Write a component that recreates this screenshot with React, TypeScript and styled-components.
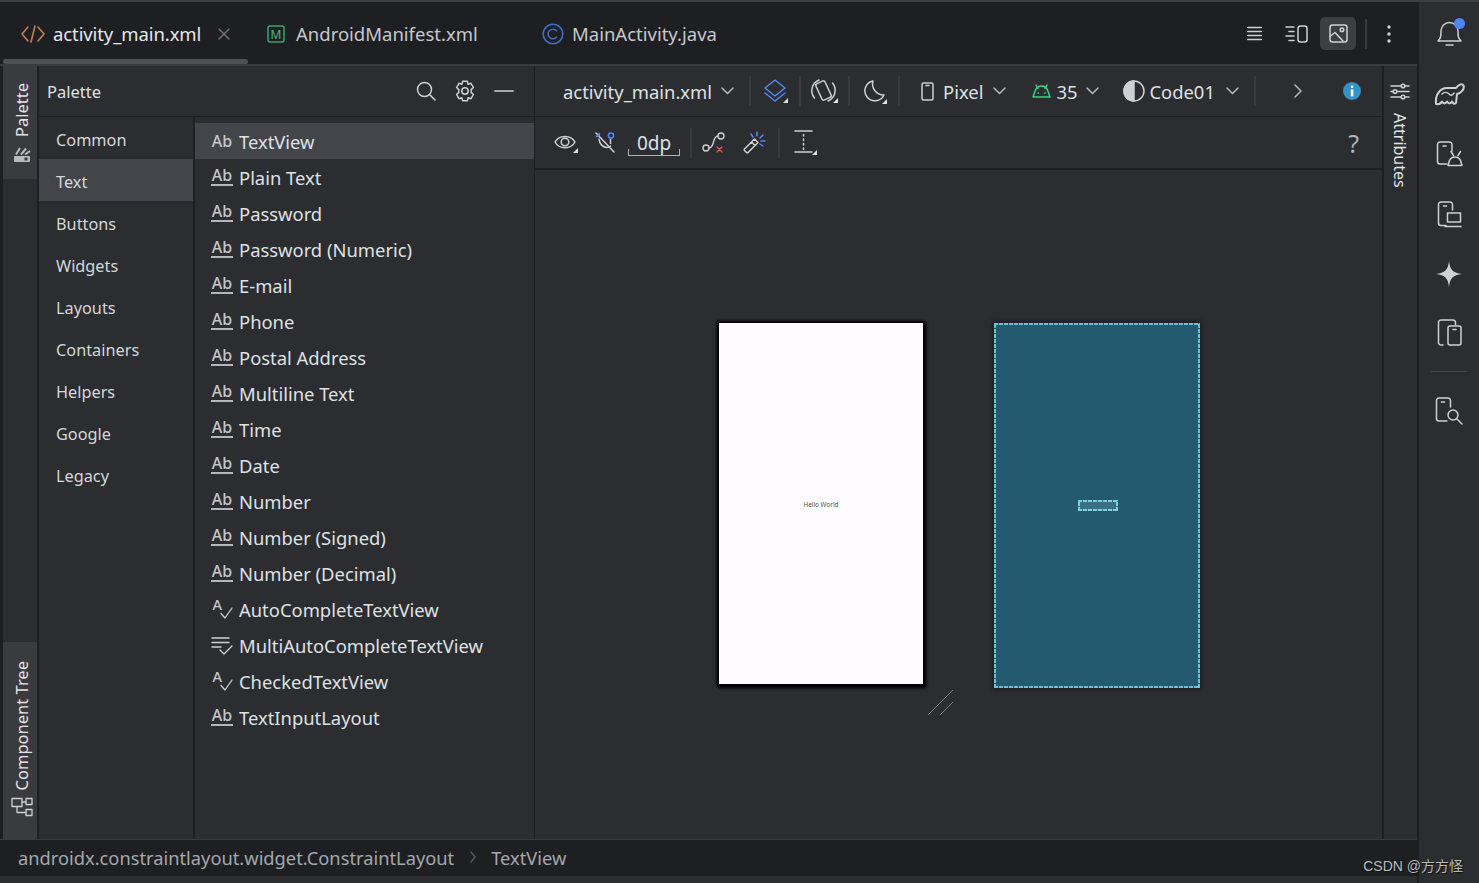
import React from "react";
import styled, { createGlobalStyle, css } from "styled-components";

const Global = createGlobalStyle`
  html, body { margin: 0; padding: 0; background: #2b2d30; }
  * { box-sizing: border-box; }
  body { font-family: "Noto Sans", "Open Sans", sans-serif; color: #dfe1e5; }
  svg { display: block; flex: none; overflow: visible; }
`;

const dashedEdges = (c: string, on: number, off: number) => css`
  background-image:
    repeating-linear-gradient(90deg, ${c} 0 ${on}px, transparent ${on}px ${on + off}px),
    repeating-linear-gradient(90deg, ${c} 0 ${on}px, transparent ${on}px ${on + off}px),
    repeating-linear-gradient(0deg, ${c} 0 ${on}px, transparent ${on}px ${on + off}px),
    repeating-linear-gradient(0deg, ${c} 0 ${on}px, transparent ${on}px ${on + off}px);
  background-position: top left, bottom left, top left, top right;
  background-size: 100% 2px, 100% 2px, 2px 100%, 2px 100%;
  background-repeat: no-repeat;
`;

const Shell = styled.div`
  position: relative;
  display: flex;
  width: 1479px;
  height: 883px;
  overflow: hidden;
  background: #2b2d30;
  border-top: 2px solid #3d3e42;
`;
const Workspace = styled.div`
  display: flex;
  flex-direction: column;
  width: 1417px;
  flex: none;
`;
const TabBar = styled.div`
  position: relative;
  display: flex;
  align-items: center;
  height: 64px;
  flex: none;
  background: #1e1f22;
  border-bottom: 2px solid #393b40;
  padding: 1px 0 0 21px;
`;
const ScrollThumb = styled.div`
  position: absolute;
  left: 3px;
  bottom: 0;
  width: 245px;
  height: 5px;
  border-radius: 3px;
  background: #4e5054;
`;
const Tab = styled.div<{ $w: number; $gap: number }>`
  display: flex;
  align-items: center;
  width: ${(p) => p.$w}px;
  flex: none;
  gap: ${(p) => p.$gap}px;
  font-size: 18.5px;
  color: #c6c8cd;
`;
const ActiveName = styled.span`
  color: #e6e8ec;
  letter-spacing: -0.1px;
  margin-right: 9px;
`;
const TabActions = styled.div`
  display: flex;
  align-items: center;
  margin-left: auto;
  padding-right: 26px;
`;
const TabAction = styled.div<{ $active?: boolean; $w: number; $ml?: number }>`
  display: flex;
  align-items: center;
  justify-content: center;
  width: ${(p) => p.$w}px;
  height: 33px;
  margin-left: ${(p) => p.$ml ?? 0}px;
  border-radius: 5px;
  background: ${(p) => (p.$active ? "#3c3e41" : "transparent")};
`;
const TabDivider = styled.div`
  width: 2px;
  height: 30px;
  margin-left: 9px;
  background: #393b40;
`;
const Body = styled.div`
  display: flex;
  flex: 1;
  min-height: 0;
  background: #1e1f22;
  padding-left: 3px;
`;
const ToolStrip = styled.div`
  display: flex;
  flex-direction: column;
  justify-content: space-between;
  width: 34px;
  flex: none;
  background: #2b2d30;
`;
const StripButton = styled.div<{ $h: number; $pb: number; $gap: number }>`
  display: flex;
  flex-direction: column-reverse;
  align-items: center;
  justify-content: flex-start;
  gap: ${(p) => p.$gap}px;
  height: ${(p) => p.$h}px;
  padding: 0 0 ${(p) => p.$pb}px 4px;
  background: #393b3f;
  color: #e2e4e8;
`;
const StripLabel = styled.span`
  writing-mode: vertical-rl;
  transform: rotate(180deg);
  font-size: 16.5px;
  line-height: 20px;
`;
const PalettePanel = styled.div`
  display: flex;
  flex-direction: column;
  width: 495px;
  margin-left: 2px;
  flex: none;
  background: #2b2d30;
`;
const PaletteHeader = styled.div`
  display: flex;
  align-items: center;
  height: 51px;
  flex: none;
  padding: 0 20px 0 8px;
  border-bottom: 1px solid #1e1f22;
  font-size: 16.5px;
  color: #dfe1e5;
`;
const PaletteTools = styled.div`
  display: flex;
  align-items: center;
  gap: 19px;
  margin-left: auto;
`;
const PaletteColumns = styled.div`
  display: flex;
  flex: 1;
  min-height: 0;
`;
const Categories = styled.div`
  width: 156px;
  flex: none;
  border-right: 2px solid #1e1f22;
`;
const Category = styled.div<{ $on?: boolean }>`
  display: flex;
  align-items: center;
  height: 42px;
  padding: 3px 0 0 17px;
  font-size: 16.3px;
  background: ${(p) => (p.$on ? "#43454a" : "transparent")};
  color: #d5d7db;
`;
const Items = styled.div`
  flex: 1;
  padding-top: 6px;
`;
const Item = styled.div<{ $on?: boolean }>`
  display: flex;
  align-items: center;
  height: 36px;
  padding-left: 16px;
  gap: 5px;
  font-size: 18.4px;
  color: #dfe1e5;
  background: ${(p) => (p.$on ? "#43454a" : "transparent")};
`;
const AbGlyph = styled.span<{ $line?: boolean }>`
  display: block;
  width: 22px;
  margin-right: 1px;
  flex: none;
  text-align: center;
  font-size: 16px;
  font-weight: 500;
  line-height: 18px;
  color: #c4c6cb;
  margin-top: ${(p) => (p.$line ? "-3px" : "0")};
  border-bottom: ${(p) => (p.$line ? "2px solid #b6b8bd" : "0")};
`;
const Editor = styled.div`
  display: flex;
  flex-direction: column;
  flex: 1;
  min-width: 0;
  margin-left: 1px;
  background: #2b2d30;
`;
const ToolbarRow = styled.div<{ $h: number; $line: number }>`
  display: flex;
  align-items: center;
  height: ${(p) => p.$h}px;
  flex: none;
  border-bottom: ${(p) => p.$line}px solid #1e1f22;
  font-size: 18.4px;
  color: #dfe1e5;
`;
const Slot = styled.div<{ $ml: number }>`
  display: flex;
  align-items: center;
  margin-left: ${(p) => p.$ml}px;
  flex: none;
`;
const VBar = styled.div<{ $ml: number }>`
  width: 2px;
  height: 30px;
  margin-left: ${(p) => p.$ml}px;
  background: #393b40;
  flex: none;
`;
const DpBox = styled.div`
  position: relative;
  width: 52px;
  margin-left: 12px;
  text-align: center;
  font-size: 19px;
  line-height: 24px;
  color: #dfe1e5;
  &::after {
    content: "";
    position: absolute;
    left: 0;
    right: 0;
    bottom: -1px;
    height: 6px;
    border: 1px solid #b0b3b8;
    border-top: 0;
  }
`;
const Help = styled.span`
  margin-left: auto;
  margin-right: 23px;
  font-size: 25px;
  color: #b0b3b8;
`;
const Canvas = styled.div`
  display: flex;
  flex: 1;
  align-items: flex-start;
  justify-content: center;
  gap: 71px;
  min-height: 0;
  padding: 153px 0 0 2px;
`;
const DesignWrap = styled.div`
  position: relative;
`;
const DesignScreen = styled.div`
  display: flex;
  align-items: center;
  justify-content: center;
  width: 204px;
  height: 361px;
  background: #fffcff;
  box-shadow: 0 0 3px 2px #000, 1px 2px 3px 2px #000;
`;
const HelloWorld = styled.span`
  font-size: 6.4px;
  color: #555;
  margin-top: 2px;
`;
const Handle = styled.svg`
  position: absolute;
  left: 208px;
  top: 366px;
`;
const BlueprintScreen = styled.div`
  display: flex;
  align-items: center;
  justify-content: center;
  width: 206px;
  height: 365px;
  background-color: #235a6f;
  ${dashedEdges("#6ac4d6", 4, 1)}
  box-shadow: 0 0 4px 2px #1e1f22;
`;
const BlueprintText = styled.div`
  width: 40px;
  height: 11px;
  margin-left: 1px;
  background-color: #3a6f84;
  ${dashedEdges("#7cd0e0", 4, 1)}
`;
const AttrStrip = styled.div`
  width: 33px;
  flex: none;
  margin-left: 2px;
  background: #2b2d30;
  display: flex;
  flex-direction: column;
  align-items: center;
  padding: 17px 2px 0 0;
  gap: 13px;
`;
const AttrLabel = styled.span`
  writing-mode: vertical-rl;
  font-size: 16px;
  line-height: 20px;
  color: #e2e4e8;
`;
const Breadcrumb = styled.div`
  display: flex;
  align-items: center;
  height: 37px;
  flex: none;
  background: #1e1f22;
  border-top: 1px solid #393b40;
  padding: 0 0 2px 18px;
  font-size: 18.3px;
  color: #a4a7ad;
`;
const Crumb = styled.span``;
const CrumbSep = styled.span`
  display: block;
  margin: 0 15px 0 16px;
`;
const FooterGap = styled.div`
  height: 7px;
  flex: none;
  background: #2b2d30;
`;
const Rail = styled.div`
  display: flex;
  flex-direction: column;
  align-items: center;
  width: 62px;
  flex: none;
  border-left: 2px solid #1e1f22;
  padding-top: 18px;
  background: #2b2d30;
`;
const RailItem = styled.div<{ $h: number }>`
  position: relative;
  display: flex;
  justify-content: center;
  align-items: flex-start;
  height: ${(p) => p.$h}px;
  flex: none;
  width: 100%;
`;
const NotifyDot = styled.span`
  position: absolute;
  left: 35px;
  top: -2px;
  width: 11px;
  height: 11px;
  border-radius: 50%;
  background: #4f86f7;
`;
const RailDivider = styled.div`
  width: 36px;
  height: 1px;
  background: #45474c;
  margin-bottom: 25px;
`;
const Watermark = styled.div`
  position: absolute;
  right: 16px;
  bottom: 8px;
  font-family: "Liberation Sans", "Noto Sans CJK SC", sans-serif;
  font-size: 14px;
  color: #b9babc;
  text-shadow: 1px 1px 1px #111;
`;

const S = "#ced0d6";
type IP = React.SVGProps<SVGSVGElement>;
const Svg = ({ w, h, children, ...r }: { w: number; h: number } & IP) => (
  <svg width={w} height={h} viewBox={`0 0 ${w} ${h}`} fill="none" stroke={S} strokeWidth={1.5} strokeLinecap="round" strokeLinejoin="round" {...r}>
    {children}
  </svg>
);
const Corner = ({ x, y }: { x: number; y: number }) => (
  <path d={`M${x} ${y}h5v-5z`} fill="#dfe1e5" stroke="none" />
);
const Chevron = ({ ml = 0 }: { ml?: number }) => (
  <Slot $ml={ml}>
    <Svg w={13} h={8} stroke="#b4b8bf"><path d="M1 1l5.5 5.5L12 1" /></Svg>
  </Slot>
);

const XmlIcon = () => (
  <Svg w={24} h={18} stroke="#c77d55" strokeWidth={1.6}><path d="M7 2L1 9l6 7M17 2l6 7-6 7M14 1l-4 16" /></Svg>
);
const ManifestIcon = () => (
  <Svg w={18} h={18} stroke="#36a56c">
    <rect x="1" y="1" width="16" height="16" rx="2" />
    <text x="9" y="13.5" textAnchor="middle" fontSize="12" fill="#4cb67f" stroke="none" fontFamily="Noto Sans">M</text>
  </Svg>
);
const ClassIcon = () => (
  <Svg w={22} h={22} stroke="#3f6fc4" strokeWidth={1.6}>
    <circle cx="11" cy="11" r="9.8" />
    <path d="M14.5 7.8a4.8 4.8 0 1 0 0 6.4" />
  </Svg>
);
const Close = () => (
  <Svg w={12} h={12} stroke="#6f7277"><path d="M1 1l10 10M11 1L1 11" /></Svg>
);
const ListIcon = () => (
  <Svg w={15} h={15}><path d="M0.8 1.5h13.4M0.8 5.5h13.4M0.8 9.5h13.4M0.8 13.5h13.4" /></Svg>
);
const SplitIcon = () => (
  <Svg w={23} h={18}>
    <path d="M1 2h8M4 6.5h5M1 11h8M4 15.5h5" />
    <rect x="13" y="1" width="9" height="16" rx="2.5" />
  </Svg>
);
const ImageIcon = () => (
  <Svg w={19} h={19}>
    <rect x="1" y="1" width="17" height="17" rx="2.5" />
    <circle cx="13" cy="5.8" r="1.8" />
    <path d="M1.5 12l4.5-3.5L14 17" />
  </Svg>
);
const Kebab = () => (
  <Svg w={4} h={18} fill={S} stroke="none">
    <circle cx="2" cy="2" r="1.7" /><circle cx="2" cy="9" r="1.7" /><circle cx="2" cy="16" r="1.7" />
  </Svg>
);
const PaletteGlyph = () => (
  <Svg w={18} h={18} stroke="#b8babf" strokeWidth={2} strokeLinecap="butt">
    <rect x="1" y="11" width="16" height="6" rx="1" fill="#b8babf" stroke="none" />
    <rect x="11.5" y="12.5" width="3" height="3" fill="#393b3f" stroke="none" />
    <path d="M3 9.5L7 3M8 9.5l5-6M12 9.5l5-3.5" />
  </Svg>
);
const TreeGlyph = () => (
  <Svg w={22} h={20} strokeWidth={1.3}>
    <rect x="1" y="1.5" width="10" height="8" />
    <rect x="15" y="1.5" width="6" height="6" />
    <rect x="15" y="12.5" width="6" height="6" />
    <path d="M11 5h4M6 9.5v6h9" />
  </Svg>
);
const SearchIcon = () => (
  <Svg w={20} h={20}><circle cx="8.5" cy="8.5" r="7" /><path d="M13.5 13.5l5.5 5.5" /></Svg>
);
const GearIcon = () => (
  <Svg w={20} h={22}>
    <path d="M7.6 1.3h4.8l.7 3 2.9-1 2.4 4.2-2.2 2.1v2.8l2.2 2.1-2.4 4.2-2.9-1-.7 3H7.6l-.7-3-2.9 1-2.4-4.2 2.2-2.1V9.6L1.6 7.5 4 3.3l2.9 1z" />
    <circle cx="10" cy="11" r="3.2" />
  </Svg>
);
const MinusIcon = () => (
  <Svg w={20} h={2}><path d="M0.8 1h18.4" /></Svg>
);
const AutoGlyph = () => (
  <Svg w={23} h={22}>
    <text x="1.5" y="12" fontSize="14.5" fontWeight="500" fontFamily="Noto Sans" fill="#c4c6cb" stroke="none">A</text>
    <path d="M10 15.5l4 4.5 7-10" strokeWidth={1.3} />
  </Svg>
);
const MultiGlyph = () => (
  <Svg w={23} h={22} strokeWidth={1.3}>
    <path d="M1 4h17M1 8.5h17M1 13h9M9 16l4 4 8-8" />
  </Svg>
);
const LayersIcon = () => (
  <Svg w={26} h={26} stroke="#548af7">
    <path d="M12 2l10 8-10 8-10-8z" />
    <path d="M2 15l10 8 10-8" />
    <Corner x={20} y={25} />
  </Svg>
);
const RotateIcon = () => (
  <Svg w={27} h={26}>
    <rect x="7.5" y="3.5" width="10" height="18" rx="2" transform="rotate(-25 12.5 12.5)" />
    <path d="M3.5 20A11.5 11.5 0 0 1 8 2M21.5 5A11.5 11.5 0 0 1 17 23" />
    <Corner x={22} y={25} />
  </Svg>
);
const MoonIcon = () => (
  <Svg w={25} h={25}>
    <path d="M10 2a10 10 0 1 0 11 14A11 11 0 0 1 10 2z" />
    <Corner x={19} y={25} />
  </Svg>
);
const PhoneIcon = () => (
  <Svg w={13} h={19}>
    <rect x="1" y="1" width="11" height="17" rx="1.5" /><path d="M5 3.5h3" />
  </Svg>
);
const AndroidIcon = () => (
  <Svg w={19} h={14} stroke="#3ccf85">
    <path d="M1 13h17l-2.5-7a6.5 6.5 0 0 0-12 0z" />
    <path d="M4 1l2 3.5M15 1l-2 3.5" />
    <path d="M6 9h.5M12.5 9h.5" />
  </Svg>
);
const ContrastIcon = () => (
  <Svg w={22} h={22}>
    <path d="M11 1a10 10 0 0 0 0 20z" fill={S} />
    <circle cx="11" cy="11" r="10" />
  </Svg>
);
const ChevronRight = () => (
  <Svg w={8} h={14} stroke="#b4b8bf"><path d="M1 1l6 6-6 6" /></Svg>
);
const InfoIcon = () => (
  <Svg w={18} h={18} stroke="none">
    <circle cx="9" cy="9" r="9" fill="#3592c4" />
    <rect x="7.8" y="3.5" width="2.6" height="2.6" rx="1.3" fill="#fff" />
    <rect x="7.8" y="7.4" width="2.6" height="7" fill="#fff" />
  </Svg>
);
const EyeIcon = () => (
  <Svg w={25} h={22}>
    <path d="M1 10C5 2.5 17 2.5 21 10 17 17.5 5 17.5 1 10z" />
    <circle cx="11" cy="10" r="3.8" />
    <Corner x={19} y={21} />
  </Svg>
);
const ConstraintOffIcon = () => (
  <Svg w={21} h={21}>
    <path d="M1 1l18 19" />
    <path d="M1.5 4.5a3 3 0 0 0 3-3z" fill="#548af7" stroke="#548af7" />
    <circle cx="16" cy="3.5" r="2.6" stroke="#548af7" />
    <path d="M4 7c.5 5 4 8.5 8 8.5 1.5 0 3-.5 3.5-1.5M15.5 7.5v4" />
  </Svg>
);
const PathIcon = () => (
  <Svg w={25} h={21} strokeWidth={1.4}>
    <circle cx="4" cy="16" r="3" />
    <circle cx="19" cy="4" r="3" />
    <path d="M7 16c6 0 3-12 9-12" />
    <path d="M15 15l5 5M20 15l-5 5" stroke="#d9534f" />
  </Svg>
);
const MagicIcon = () => (
  <Svg w={23} h={23}>
    <path d="M1.5 18l10-10 3.5 3.500-10 10a1 1 0 0 1-1.500 0l-2-2a1 1 0 0 1 0-1.500zM8.500 11l3.500 3.500" />
    <path d="M14 1v4M20 4l-3 3M22 10h-4M20 15l-3-2M8 3l2 3" stroke="#548af7" />
  </Svg>
);
const MarginIcon = () => (
  <Svg w={23} h={25}>
    <path d="M1 1h17M1 22h17" />
    <path d="M9.5 4.5v15" strokeDasharray="1.5 3" />
    <Corner x={18} y={25} />
  </Svg>
);
const Sliders = () => (
  <Svg w={19} h={17}>
    <path d="M1 3h18M1 8.5h18M1 14h18" />
    <circle cx="13" cy="3" r="1.8" fill="#2b2d30" />
    <circle cx="5" cy="8.5" r="1.8" fill="#2b2d30" />
    <circle cx="13" cy="14" r="1.8" fill="#2b2d30" />
  </Svg>
);
const BellIcon = () => (
  <Svg w={27} h={28}>
    <path d="M2 21c3-3 3-5 3-10a8.5 8.5 0 0 1 17 0c0 5 0 7 3 10z" />
    <path d="M10 25h7" />
  </Svg>
);
const ElephantIcon = () => (
  <Svg w={31} h={24} strokeWidth={2}>
    <path d="M2 22C1 13 6 6 13 6h9c2-3 6-5 7.500-2.500C31 7 27 11 23 12l-1 9c-2 1.500-3 .5-4-1.500-1.500 2.500-3.500 2.500-5 0-1.500 2.500-3.500 2.500-5 0-1 2-3 3-6 2.500z" />
    <path d="M8 12c2-2 5-2 7 0 2 2 4 1 5-1" strokeWidth={1.6} />
  </Svg>
);
const DeviceAndroid = () => (
  <Svg w={27} h={26}>
    <path d="M11 23H4a2.5 2.5 0 0 1-2.5-2.5v-17A2.5 2.5 0 0 1 4 1h9.5A2.5 2.5 0 0 1 16 3.5V10" />
    <path d="M7 5h3" />
    <path d="M12 24.5h14l-1.5-5a6 6 0 0 0-11 0zM15 10.5l2.5 4M24.5 10.5l-2.5 4" />
  </Svg>
);
const DeviceLaptop = () => (
  <Svg w={25} h={27}>
    <path d="M9 24.5H4A2.5 2.5 0 0 1 1.5 22V3.5A2.5 2.5 0 0 1 4 1h9A2.5 2.5 0 0 1 15.5 3.5V9" />
    <path d="M6.5 5h3" />
    <rect x="10.5" y="12" width="13" height="9" />
    <path d="M8 25.5h16" />
  </Svg>
);
const SparkIcon = () => (
  <svg width="26" height="26" viewBox="0 0 26 26">
    <path d="M13 0C14 9 17 12 26 13 17 14 14 17 13 26 12 17 9 14 0 13 9 12 12 9 13 0z" fill="#ced0d6" />
  </svg>
);
const MirrorIcon = () => (
  <Svg w={25} h={27}>
    <path d="M6 26H4a2.5 2.5 0 0 1-2.5-2.5v-20A2.5 2.5 0 0 1 4 1h12a2.5 2.5 0 0 1 2.5 2.5V6" />
    <rect x="11" y="7" width="13" height="19" rx="2" />
    <path d="M16 10.5h3" />
  </Svg>
);
const DeviceSearch = () => (
  <Svg w={28} h={28}>
    <path d="M12 24H4a2.5 2.5 0 0 1-2.5-2.5v-18A2.5 2.5 0 0 1 4 1h9a2.5 2.5 0 0 1 2.5 2.5V10" />
    <path d="M6.5 5h3" />
    <circle cx="18" cy="18" r="5" />
    <path d="M22 22l5 5" />
  </Svg>
);

const categories = ["Common", "Text", "Buttons", "Widgets", "Layouts", "Containers", "Helpers", "Google", "Legacy"];
type Kind = "ab" | "line" | "auto" | "multi";
const items: [string, Kind][] = [
  ["TextView", "ab"], ["Plain Text", "line"], ["Password", "line"], ["Password (Numeric)", "line"],
  ["E-mail", "line"], ["Phone", "line"], ["Postal Address", "line"], ["Multiline Text", "line"],
  ["Time", "line"], ["Date", "line"], ["Number", "line"], ["Number (Signed)", "line"],
  ["Number (Decimal)", "line"], ["AutoCompleteTextView", "auto"], ["MultiAutoCompleteTextView", "multi"],
  ["CheckedTextView", "auto"], ["TextInputLayout", "line"],
];
const glyph = (k: Kind) => {
  if (k === "auto") return <AutoGlyph />;
  if (k === "multi") return <MultiGlyph />;
  return <AbGlyph $line={k === "line"}>Ab</AbGlyph>;
};

export default function App() {
  return (
    <Shell>
      <Global />
      <Workspace>
        <TabBar>
          <Tab $w={246} $gap={8}>
            <XmlIcon />
            <ActiveName>activity_main.xml</ActiveName>
            <Close />
          </Tab>
          <Tab $w={275} $gap={11}><ManifestIcon /><span>AndroidManifest.xml</span></Tab>
          <Tab $w={200} $gap={8}><ClassIcon /><span>MainActivity.java</span></Tab>
          <TabActions>
            <TabAction $w={15}><ListIcon /></TabAction>
            <TabAction $w={23} $ml={23}><SplitIcon /></TabAction>
            <TabAction $w={36} $ml={12} $active><ImageIcon /></TabAction>
            <TabDivider />
            <TabAction $w={4} $ml={20}><Kebab /></TabAction>
          </TabActions>
          <ScrollThumb />
        </TabBar>
        <Body>
          <ToolStrip>
            <StripButton $h={113} $pb={16} $gap={8}><PaletteGlyph /><StripLabel>Palette</StripLabel></StripButton>
            <StripButton $h={197} $pb={22} $gap={7}><TreeGlyph /><StripLabel>Component Tree</StripLabel></StripButton>
          </ToolStrip>
          <PalettePanel>
            <PaletteHeader>
              Palette
              <PaletteTools><SearchIcon /><GearIcon /><MinusIcon /></PaletteTools>
            </PaletteHeader>
            <PaletteColumns>
              <Categories>
                {categories.map((c) => <Category key={c} $on={c === "Text"}>{c}</Category>)}
              </Categories>
              <Items>
                {items.map(([n, k], i) => (
                  <Item key={n} $on={i === 0}>{glyph(k)}<span>{n}</span></Item>
                ))}
              </Items>
            </PaletteColumns>
          </PalettePanel>
          <Editor>
            <ToolbarRow $h={51} $line={1}>
              <Slot $ml={28}><span>activity_main.xml</span></Slot>
              <Chevron ml={9} />
              <VBar $ml={15} />
              <Slot $ml={12}><LayersIcon /></Slot>
              <VBar $ml={10} />
              <Slot $ml={10}><RotateIcon /></Slot>
              <VBar $ml={10} />
              <Slot $ml={13}><MoonIcon /></Slot>
              <VBar $ml={10} />
              <Slot $ml={21}><PhoneIcon /></Slot>
              <Slot $ml={9}><span>Pixel</span></Slot>
              <Chevron ml={10} />
              <Slot $ml={26}><AndroidIcon /></Slot>
              <Slot $ml={5}><span>35</span></Slot>
              <Chevron ml={9} />
              <Slot $ml={24}><ContrastIcon /></Slot>
              <Slot $ml={4}><span>Code01</span></Slot>
              <Chevron ml={11} />
              <VBar $ml={15} />
              <Slot $ml={38}><ChevronRight /></Slot>
              <Slot $ml={41}><InfoIcon /></Slot>
            </ToolbarRow>
            <ToolbarRow $h={53} $line={2}>
              <Slot $ml={19}><EyeIcon /></Slot>
              <Slot $ml={16}><ConstraintOffIcon /></Slot>
              <DpBox>0dp</DpBox>
              <VBar $ml={10} />
              <Slot $ml={10}><PathIcon /></Slot>
              <Slot $ml={16}><MagicIcon /></Slot>
              <VBar $ml={12} />
              <Slot $ml={14}><MarginIcon /></Slot>
              <Help>?</Help>
            </ToolbarRow>
            <Canvas>
              <DesignWrap>
                <DesignScreen><HelloWorld>Hello World</HelloWorld></DesignScreen>
                <Handle width="27" height="27" viewBox="0 0 27 27" fill="none" stroke="#7d7f83" strokeWidth="1">
                  <path d="M1 26L26 1M13 26L26 13" />
                </Handle>
              </DesignWrap>
              <BlueprintScreen><BlueprintText /></BlueprintScreen>
            </Canvas>
          </Editor>
          <AttrStrip>
            <Sliders />
            <AttrLabel>Attributes</AttrLabel>
          </AttrStrip>
        </Body>
        <Breadcrumb>
          <Crumb>androidx.constraintlayout.widget.ConstraintLayout</Crumb>
          <CrumbSep><Svg w={6} h={12} stroke="#55575c"><path d="M1 1l4 5-4 5" /></Svg></CrumbSep>
          <Crumb>TextView</Crumb>
        </Breadcrumb>
        <FooterGap />
      </Workspace>
      <Rail>
        <RailItem $h={62}><BellIcon /><NotifyDot /></RailItem>
        <RailItem $h={59}><ElephantIcon /></RailItem>
        <RailItem $h={60}><DeviceAndroid /></RailItem>
        <RailItem $h={60}><DeviceLaptop /></RailItem>
        <RailItem $h={58}><SparkIcon /></RailItem>
        <RailItem $h={52}><MirrorIcon /></RailItem>
        <RailDivider />
        <RailItem $h={40}><DeviceSearch /></RailItem>
      </Rail>
      <Watermark>CSDN @方方怪</Watermark>
    </Shell>
  );
}
